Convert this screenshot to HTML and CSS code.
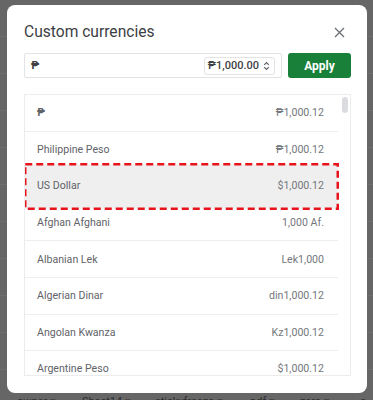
FILE: index.html
```html
<!DOCTYPE html>
<html>
<head>
<meta charset="utf-8">
<link rel="stylesheet" href="styles.css">
</head>
<body>
<div class="page">
  <div class="modal">
    <div class="header">
      <div class="title">Custom currencies</div>
      <div class="close">
        <svg width="11" height="11" viewBox="0 0 11 11"><path d="M1 1 L10 10 M10 1 L1 10" stroke="#6f7378" stroke-width="1.4" fill="none"/></svg>
      </div>
    </div>
    <div class="controls">
      <div class="input">
        <span class="input-text">₱</span>
        <div class="spinner">
          <span>₱1,000.00</span>
          <svg width="7" height="10" viewBox="0 0 7 10"><path d="M1.2 3.8 L3.5 1.5 L5.8 3.8 M1.2 6.2 L3.5 8.5 L5.8 6.2" stroke="#5f6368" stroke-width="1.2" fill="none"/></svg>
        </div>
      </div>
      <div class="apply">Apply</div>
    </div>
    <div class="list">
      <div class="rows">
        <div class="row"><span class="name sym">₱</span><span class="val">₱1,000.12</span></div>
        <div class="row"><span class="name">Philippine Peso</span><span class="val">₱1,000.12</span></div>
        <div class="row selected">
          <svg class="mark" width="315" height="47" viewBox="0 0 315 47"><rect x="1.25" y="1.25" width="312.5" height="44.5" fill="#efefef" stroke="#e8141c" stroke-width="2.5" stroke-dasharray="7 4"/></svg>
          <span class="name">US Dollar</span><span class="val">$1,000.12</span>
        </div>
        <div class="row"><span class="name">Afghan Afghani</span><span class="val">1,000 Af.</span></div>
        <div class="row"><span class="name">Albanian Lek</span><span class="val">Lek1,000</span></div>
        <div class="row"><span class="name">Algerian Dinar</span><span class="val">din1,000.12</span></div>
        <div class="row"><span class="name">Angolan Kwanza</span><span class="val">Kz1,000.12</span></div>
        <div class="row"><span class="name">Argentine Peso</span><span class="val">$1,000.12</span></div>
        <div class="row"><span class="name">Armenian Dram</span><span class="val">1,000.12 AMD</span></div>
      </div>
      <div class="scroll"><div class="thumb"></div></div>
    </div>
  </div>
  <div class="tabs">
    <span class="tab t1">owner ▾</span><span class="tab t2">Sheet14 ▾</span><span class="tab t3">stickyfreeze ▾</span><span class="tab t4">pdf ▾</span><span class="tab t5">zero ▾</span><span class="tab">o</span>
  </div>
</div>
</body>
</html>
```
FILE: styles.css
```css
html, body {
  margin: 0;
  padding: 0;
}
body {
  width: 373px;
  height: 400px;
  overflow: hidden;
  background-color: #666666;
  background-image: repeating-linear-gradient(to bottom, transparent 0, transparent 36px, #6e6e6e 36px, #6e6e6e 37px);
  font-family: Roboto, "Liberation Sans", sans-serif;
}
.page {
  padding-top: 5px;
}
.modal {
  margin-left: 7px;
  width: 360px;
  height: 388px;
  box-sizing: border-box;
  background: #ffffff;
  border-radius: 8px;
  padding: 16px 16px 0 17px;
  display: flex;
  flex-direction: column;
}
.header {
  display: flex;
  align-items: center;
  justify-content: space-between;
  height: 22px;
}
.title {
  font-size: 15.6px;
  line-height: 22px;
  color: #3c4043;
}
.close {
  width: 24px;
  height: 22px;
  display: flex;
  align-items: center;
  justify-content: center;
}
.controls {
  margin-top: 10px;
  display: flex;
  gap: 6px;
  height: 25px;
}
.input {
  width: 258px;
  box-sizing: border-box;
  border: 1px solid #e3e3e3;
  border-radius: 2px;
  display: flex;
  align-items: center;
  justify-content: space-between;
  padding: 0 6px 0 6px;
}
.input-text {
  font-size: 11px;
  font-weight: 700;
  color: #3c4043;
}
.spinner {
  width: 71px;
  height: 18px;
  box-sizing: border-box;
  border: 1px solid #e3e3e3;
  border-radius: 3px;
  display: flex;
  align-items: center;
  justify-content: flex-end;
  gap: 4px;
  padding-right: 4px;
  font-size: 11px;
  font-weight: 500;
  color: #3c4043;
}
.spinner svg {
  display: block;
}
.apply {
  width: 63px;
  background: #188038;
  border-radius: 3px;
  color: #ffffff;
  font-size: 12px;
  font-weight: 700;
  display: flex;
  align-items: center;
  justify-content: center;
}
.list {
  margin-top: 16px;
  height: 282px;
  box-sizing: border-box;
  border: 1px solid #ececec;
  display: flex;
  overflow: hidden;
}
.rows {
  width: 313px;
  display: flex;
  flex-direction: column;
}
.row {
  position: relative;
  flex: none;
  height: 36.6px;
  box-sizing: border-box;
  border-bottom: 1px solid #eeeeee;
  display: flex;
  align-items: center;
  justify-content: space-between;
  padding: 0 14px 0 12px;
  font-size: 10.6px;
}
.row.selected {
  border-bottom-color: transparent;
}
.mark {
  position: absolute;
  left: -1px;
  top: -5.6px;
  z-index: 0;
}
.name, .val {
  position: relative;
  z-index: 1;
}
.name {
  color: #5f6368;
}
.sym {
  font-weight: 700;
}
.val {
  color: #74787c;
}
.scroll {
  flex: 1;
  padding: 2px 0 0 4px;
}
.thumb {
  width: 6px;
  height: 16px;
  border-radius: 3px;
  background: #dadce0;
}
.tabs {
  display: flex;
  padding: 2px 0 0 17px;
  font-size: 11px;
  line-height: 13px;
  color: #2e2e2e;
  white-space: nowrap;
}
.tab {
  flex: none;
}
.t1 { width: 65px; }
.t2 { width: 73px; }
.t3 { width: 95px; }
.t4 { width: 50px; }
.t5 { width: 60px; }
```
